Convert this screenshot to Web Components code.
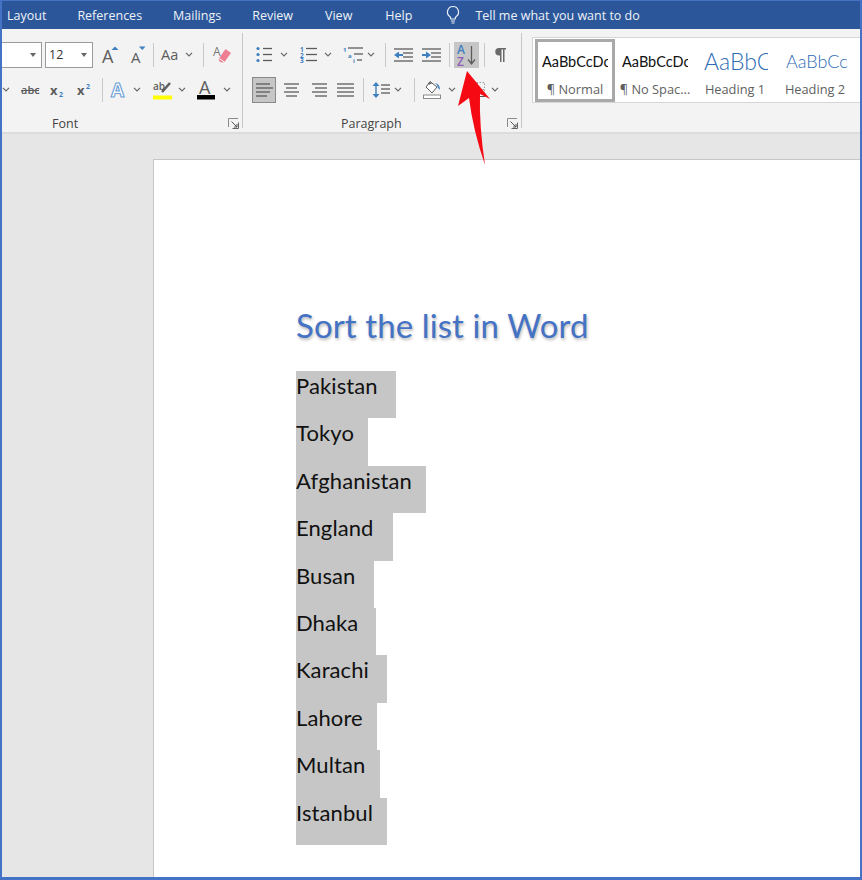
<!DOCTYPE html>
<html>
<head>
<meta charset="utf-8">
<title>Sort the list in Word</title>
<style>
  html, body { margin: 0; padding: 0; height: 100%; overflow: hidden; }
  body { font-family: "Open Sans", sans-serif; }
</style>
</head>
<body>
<word-window>
  <word-tabs></word-tabs>
  <word-ribbon>
    <font-group></font-group>
    <paragraph-group></paragraph-group>
    <style-gallery></style-gallery>
  </word-ribbon>
  <word-canvas>
    <h1 slot="title">Sort the list in Word</h1>
    <sel-line w="100">Pakistan</sel-line>
    <sel-line w="72">Tokyo</sel-line>
    <sel-line w="130">Afghanistan</sel-line>
    <sel-line w="97">England</sel-line>
    <sel-line w="78">Busan</sel-line>
    <sel-line w="80">Dhaka</sel-line>
    <sel-line w="91">Karachi</sel-line>
    <sel-line w="81">Lahore</sel-line>
    <sel-line w="84">Multan</sel-line>
    <sel-line w="91">Istanbul</sel-line>
  </word-canvas>
  <svg slot="overlay" width="862" height="880" viewBox="0 0 862 880" style="position:absolute;left:-2px;top:-1px;pointer-events:none">
    <path d="M467 71 L490 99 L480 94 Q479 125 485 165 Q473 130 469 98 L458 106 Z" fill="#f50a14"/>
  </svg>
</word-window>

<script>
const GREY = "#5c5c5c";
const BLUE = "#3d7fbf";
const svg = (w, h, body) => `<svg width="${w}" height="${h}" viewBox="0 0 ${w} ${h}" style="display:block;overflow:visible">${body}</svg>`;
const lines = (list, color = GREY) => list.map(([x1, y1, x2]) => `<path d="M${x1} ${y1}H${x2}" stroke="${color}" stroke-width="1.300"/>`).join("");
const txt = (x, y, size, color, s, extra = "") => `<text x="${x}" y="${y}" font-size="${size}" fill="${color}" font-family="Open Sans" ${extra}>${s}</text>`;

class WordWindow extends HTMLElement {
  constructor() {
    super();
    this.attachShadow({ mode: "open" }).innerHTML = `
    <style>
      :host {
        display: flex;
        flex-direction: column;
        position: relative;
        width: 858px;
        height: 876px;
        border: solid #4472c4;
        border-width: 1px 2px 3px 2px;
        overflow: hidden;
        background: #e6e6e6;
      }
    </style>
    <slot></slot>
    <slot name="overlay"></slot>`;
  }
}

class WordTabs extends HTMLElement {
  constructor() {
    super();
    const tabs = ["Layout", "References", "Mailings", "Review", "View", "Help"];
    this.attachShadow({ mode: "open" }).innerHTML = `
    <style>
      :host {
        display: flex;
        align-items: center;
        gap: 31px;
        height: 28px;
        padding-left: 5px;
        background: #2b579a;
        color: #eef2f8;
        font: 12.500px "Open Sans", sans-serif;
        flex: none;
      }
      span:nth-of-type(5) { margin-left: 1px; }
      span:nth-of-type(6) { margin-left: 2px; }
      .tell { display: flex; align-items: center; gap: 14px; margin-left: 2px; }
    </style>
    ${tabs.map((t) => `<span>${t}</span>`).join("")}
    <span class="tell">
      ${svg(16, 20, `<path d="M8 1.500a5.500 5.500 0 0 0-3.200 10c.8.700 1 1.500 1 2.500h4.400c0-1 .2-1.800 1-2.500A5.500 5.500 0 0 0 8 1.500zM6 16h4M6.500 18h3" fill="none" stroke="#eef2f8" stroke-width="1.200"/>`)}
      <span style="margin:0">Tell me what you want to do</span>
    </span>`;
  }
}

class WordRibbon extends HTMLElement {
  constructor() {
    super();
    this.attachShadow({ mode: "open" }).innerHTML = `
    <style>
      :host {
        display: flex;
        flex: none;
        height: 103px;
        background: #f3f3f3;
        border-bottom: 2px solid #dcdcdc;
        box-sizing: content-box;
        overflow: hidden;
      }
    </style>
    <slot></slot>`;
  }
}

class RibbonGroup extends HTMLElement {
  constructor() {
    super();
    this.attachShadow({ mode: "open" }).innerHTML = `
    <style>
      :host {
        display: flex;
        flex-direction: column;
        box-sizing: border-box;
        height: 95px;
        margin-top: 4px;
        border-right: 1px solid #c6c6c6;
        flex: none;
      }
      .rows { display: flex; flex-direction: column; gap: 8px; padding-top: 8px; height: 86px; box-sizing: border-box; }
      .foot { display: flex; align-items: center; height: 9px; font: 12.500px "Open Sans", sans-serif; color: #444; }
      .foot span { margin-left: var(--label-x, 0); }
      .foot svg { margin-left: auto; margin-right: 3px; }
    </style>
    <div class="rows"><slot></slot></div>
    <div class="foot">
      <span></span>
      ${svg(11, 11, `<path d="M.5 9V.5H10" fill="none" stroke="#8a8a8a"/><path d="M10.500 4.500V10.500H4.500" fill="none" stroke="#666"/><path d="M3.500 3.500L9 9M6 9H9V6" fill="none" stroke="#555"/>`)}
    </div>`;
  }
  connectedCallback() {
    this.shadowRoot.querySelector(".foot span").textContent = this.getAttribute("label");
  }
}

class ToolRow extends HTMLElement {
  constructor() {
    super();
    this.attachShadow({ mode: "open" }).innerHTML = `
    <style>:host { display: flex; align-items: center; height: 27px; }</style><slot></slot>`;
  }
}

class ToolBtn extends HTMLElement {
  constructor() {
    super();
    this.attachShadow({ mode: "open" }).innerHTML = `
    <style>
      :host { display: flex; align-items: center; justify-content: center; flex: none; height: 26px; }
      :host([on]) { background: #c6c6c6; }
      :host([on="box"]) { box-shadow: inset 0 0 0 1px #8a8a8a; }
    </style>
    <slot></slot>`;
  }
}

class ToolCaret extends HTMLElement {
  constructor() {
    super();
    this.attachShadow({ mode: "open" }).innerHTML = `
    <style>:host { display: block; flex: none; width: 8px; height: 5px; }</style>
    <svg width="8" height="5" viewBox="0 0 8 5" style="display:block"><path d="M1 .8L4 3.800L7 .8" fill="none" stroke="#666" stroke-width="1.200"/></svg>`;
  }
}

class ToolSep extends HTMLElement {
  constructor() {
    super();
    this.attachShadow({ mode: "open" }).innerHTML = `
    <style>:host { display: block; flex: none; width: 1px; height: 24px; background: #c9c9c9; }</style>`;
  }
}

class ComboBox extends HTMLElement {
  constructor() {
    super();
    this.attachShadow({ mode: "open" }).innerHTML = `
    <style>
      :host {
        display: flex; align-items: center; box-sizing: border-box; flex: none;
        height: 26px; background: #fff; border: 1px solid #9b9b9b;
        font: 12.500px "Open Sans", sans-serif; color: #333; padding-left: 3px;
      }
      :host(.cut) { border-left: 0; }
      span { flex: 1; }
      i { border: 3.500px solid transparent; border-top: 4px solid #666; border-bottom: 0; margin-right: 5px; }
    </style>
    <span><slot></slot></span><i></i>`;
  }
}

class FontGroup extends HTMLElement {
  constructor() {
    super();
    this.attachShadow({ mode: "open" }).innerHTML = `
    <style>
      :host { display: block; flex: none; }
      ribbon-group { width: 241px; --label-x: 50px; }
    </style>
    <ribbon-group label="Font">
      <tool-row>
        <combo-box class="cut" style="width:40px"></combo-box>
        <combo-box style="width:48px;margin-left:3px">12</combo-box>
        <tool-btn style="margin-left:9px">${svg(17, 20, txt(0, 18, 18, GREY, "A") + `<path d="M9.500 5L13 1.500L16.500 5Z" fill="${BLUE}"/>`)}</tool-btn>
        <tool-btn style="margin-left:11px">${svg(16, 20, txt(1, 18, 15, GREY, "A") + `<path d="M9 1.500H15.500L12.250 5Z" fill="${BLUE}"/>`)}</tool-btn>
        <tool-sep style="margin-left:7px"></tool-sep>
        <tool-btn style="margin-left:7px">${svg(18, 20, txt(0, 15, 14.5, GREY, "Aa"))}</tool-btn>
        <tool-caret style="margin-left:6px"></tool-caret>
        <tool-sep style="margin-left:10px"></tool-sep>
        <tool-btn style="margin-left:9px">${svg(18, 20, txt(0, 11, 12, "#777", "A") + `<path d="M5.500 14L12.500 4L18 8L11.500 17Q9 18 6.500 16.500Z" fill="#ee7f92"/><path d="M6 13.500L11.500 17" stroke="#fff"/>`)}</tool-btn>
      </tool-row>
      <tool-row>
        <tool-caret></tool-caret>
        <tool-btn style="margin-left:11px">${svg(18, 18, txt(0, 13, 11, GREY, "abc", 'font-weight="600"') + `<path d="M0 9.500H18" stroke="${GREY}"/>`)}</tool-btn>
        <tool-btn style="margin-left:11px">${svg(14, 18, txt(0, 14, 13, GREY, "x", 'font-weight="700"') + txt(9, 16, 7, BLUE, "2", 'font-weight="700"'))}</tool-btn>
        <tool-btn style="margin-left:13px">${svg(15, 18, txt(0, 14, 13, GREY, "x", 'font-weight="700"') + txt(9, 8, 7, BLUE, "2", 'font-weight="700"'))}</tool-btn>
        <tool-sep style="margin-left:10px"></tool-sep>
        <tool-btn style="margin-left:8px">${svg(16, 18, `<text x="0" y="16" font-size="19" font-family="Open Sans" font-weight="700" fill="#fff" stroke="#6d9fd6" stroke-width="1.100">A</text>`)}</tool-btn>
        <tool-caret style="margin-left:6px"></tool-caret>
        <tool-btn style="margin-left:12px">${svg(19, 20, txt(0, 10, 10, GREY, "ab", 'font-weight="600"') + `<path d="M9 12L17 3" stroke="${GREY}" stroke-width="2.500"/><rect y="15.500" width="19" height="4" fill="#ffff00"/>`)}</tool-btn>
        <tool-caret style="margin-left:6px"></tool-caret>
        <tool-btn style="margin-left:11px">${svg(18, 20, txt(2, 14, 18, GREY, "A") + `<rect y="15" width="18" height="4.500" fill="#000"/>`)}</tool-btn>
        <tool-caret style="margin-left:8px"></tool-caret>
      </tool-row>
    </ribbon-group>`;
  }
}

class ParagraphGroup extends HTMLElement {
  constructor() {
    super();
    const align = (list) => svg(17, 14, lines(list));
    const indent = (d) => svg(19, 14, lines([[0, 1, 19], [9, 5, 19], [9, 9, 19], [0, 13, 19]]) +
      `<path d="${d}" fill="${BLUE}"/>`);
    this.attachShadow({ mode: "open" }).innerHTML = `
    <style>
      :host { display: block; flex: none; }
      ribbon-group { width: 279px; --label-x: 98px; }
    </style>
    <ribbon-group label="Paragraph">
      <tool-row>
        <tool-btn style="margin-left:13px">${svg(16, 17, `<circle cx="2" cy="2.500" r="1.600" fill="${BLUE}"/><circle cx="2" cy="8.500" r="1.600" fill="${BLUE}"/><circle cx="2" cy="14.500" r="1.600" fill="${BLUE}"/>` + lines([[7, 2.5, 16], [7, 8.5, 16], [7, 14.5, 16]]))}</tool-btn>
        <tool-caret style="margin-left:8px"></tool-caret>
        <tool-btn style="margin-left:12px">${svg(17, 17, txt(0, 5.5, 6.5, BLUE, "1", 'font-weight="700"') + txt(0, 11.5, 6.5, BLUE, "2", 'font-weight="700"') + txt(0, 17, 6.5, BLUE, "3", 'font-weight="700"') + lines([[6, 2.5, 17], [6, 8.5, 17], [6, 14.5, 17]]))}</tool-btn>
        <tool-caret style="margin-left:7px"></tool-caret>
        <tool-btn style="margin-left:11px">${svg(20, 17, txt(0, 6, 6, BLUE, "1", 'font-weight="700"') + txt(5, 11.5, 6, BLUE, "a", 'font-weight="700"') + txt(10, 17, 6, BLUE, "i", 'font-weight="700"') + lines([[5, 2, 20], [11, 8, 20], [14, 14, 19]]))}</tool-btn>
        <tool-caret style="margin-left:4px"></tool-caret>
        <tool-sep style="margin-left:10px"></tool-sep>
        <tool-btn style="margin-left:8px">${indent("M0 7L5 3.500V6H9V8H5V10.500Z")}</tool-btn>
        <tool-btn style="margin-left:9px">${indent("M9 7L4 3.500V6H0V8H4V10.500Z")}</tool-btn>
        <tool-sep style="margin-left:8px"></tool-sep>
        <tool-btn on style="margin-left:4px;width:25px">${svg(19, 22, txt(0, 10, 12, BLUE, "A", 'font-weight="600"') + txt(0, 21.5, 12, "#8e5bb5", "Z", 'font-weight="600"') + `<path d="M14.500 2V19M11 15.500L14.500 20L18 15.500" fill="none" stroke="${GREY}" stroke-width="1.300"/>`)}</tool-btn>
        <tool-sep style="margin-left:5px"></tool-sep>
        <tool-btn style="margin-left:9px">${svg(12, 15, `<path d="M5 1H12V2.500H10.500V15H9V2.500H7.500V15H6V8.500H5A3.750 3.750 0 0 1 5 1Z" fill="#6a6a6a"/>`)}</tool-btn>
      </tool-row>
      <tool-row>
        <tool-btn on="box" style="margin-left:9px;width:24px">${align([[0, 1, 14], [0, 5, 17], [0, 9, 14], [0, 13, 11]])}</tool-btn>
        <tool-btn style="margin-left:7px">${align([[1, 1, 16], [3, 5, 14], [1, 9, 16], [3, 13, 14]])}</tool-btn>
        <tool-btn style="margin-left:10px">${align([[2, 1, 17], [5, 5, 17], [2, 9, 17], [5, 13, 17]])}</tool-btn>
        <tool-btn style="margin-left:10px">${align([[0, 1, 17], [0, 5, 17], [0, 9, 17], [0, 13, 17]])}</tool-btn>
        <tool-sep style="margin-left:9px"></tool-sep>
        <tool-btn style="margin-left:8px">${svg(18, 18, `<path d="M4 1L7.500 5H.5ZM4 17L.5 13H7.500ZM3.300 4H4.700V14H3.300Z" fill="${BLUE}"/>` + lines([[9, 4, 18], [9, 8, 18], [9, 12, 18]]))}</tool-btn>
        <tool-caret style="margin-left:4px"></tool-caret>
        <tool-sep style="margin-left:12px"></tool-sep>
        <tool-btn style="margin-left:8px">${svg(18, 19, `<path d="M3 7L7 1.500L14 7L9 13Z" fill="#fff" stroke="${GREY}"/><path d="M5 5L7 2L9 3.500Z" fill="${GREY}"/><path d="M12 3Q17 4 17 10L15 8Q15 5 12 3Z" fill="${BLUE}"/><rect x=".5" y="15" width="17" height="3.500" fill="#fff" stroke="#8a8a8a"/>`)}</tool-btn>
        <tool-caret style="margin-left:7px"></tool-caret>
        <tool-btn style="margin-left:14px">${svg(15, 15, `<path d="M.5 .5H14.500V14.500H.5ZM7.500 .5V14.500M.5 7.500H14.500" fill="none" stroke="#9a9a9a" stroke-dasharray="1.500 1.500"/><path d="M0 14.500H15" stroke="#555"/>`)}</tool-btn>
        <tool-caret style="margin-left:6px"></tool-caret>
      </tool-row>
    </ribbon-group>`;
  }
}

class StyleTile extends HTMLElement {
  constructor() {
    super();
    this.attachShadow({ mode: "open" }).innerHTML = `
    <style>
      :host { display: flex; flex-direction: column; box-sizing: border-box; width: 80px; flex: none; height: 100%; align-items: center; overflow: hidden; padding-top: 3px; }
      :host([active]) { border: 3px solid #a9a9a9; box-shadow: inset 0 0 0 1px #fff; padding-top: 0; }
      .sample { height: 38px; display: flex; align-items: center; width: 66px; overflow: hidden; white-space: nowrap;
        padding-left: var(--sample-shift, 0); box-sizing: border-box;
        font: var(--sample-weight, 400) var(--sample-size, 14.500px) "Lato", sans-serif; color: var(--sample-color, #111); }
      .name { font: 12.800px "Open Sans", sans-serif; color: #5f5f5f; white-space: nowrap; }
    </style>
    <div class="sample"><slot name="sample"></slot></div>
    <div class="name"><slot></slot></div>`;
  }
}

class StyleGallery extends HTMLElement {
  constructor() {
    super();
    this.attachShadow({ mode: "open" }).innerHTML = `
    <style>
      :host {
        display: flex; flex: 1; box-sizing: border-box; height: 66px;
        margin: 8px 0 0 10px; background: #fff; border: 1px solid #d6d6d6; border-right: 0;
        padding: 1px 0 0 2px; overflow: hidden;
      }
    </style>
    <style-tile active><span slot="sample">AaBbCcDc</span>¶ Normal</style-tile>
    <style-tile><span slot="sample">AaBbCcDc</span>¶ No Spac...</style-tile>
    <style-tile style="--sample-size:23px;--sample-weight:300;--sample-color:#2f6db5;--sample-shift:2px"><span slot="sample">AaBbCc</span>Heading 1</style-tile>
    <style-tile style="--sample-size:18px;--sample-weight:300;--sample-color:#2f6db5;--sample-shift:4px"><span slot="sample">AaBbCcD</span>Heading 2</style-tile>`;
  }
}

class WordCanvas extends HTMLElement {
  constructor() {
    super();
    this.attachShadow({ mode: "open" }).innerHTML = `
    <style>
      :host {
        display: flex;
        flex: 1;
        min-height: 0;
        padding: 25px 0 0 151px;
        background: #e6e6e6;
      }
      .page {
        flex: 1;
        background: #fff;
        border: solid #c6c6c6;
        border-width: 1px 0 0 1px;
        padding: 141px 0 0 142px;
        overflow: hidden;
      }
      ::slotted(h1) {
        margin: 0 0 22px;
        height: 48px;
        font: 400 33px/48px "Lato", sans-serif;
        letter-spacing: .1px;
        color: #4472c4;
        text-shadow: 1px 2px 3px rgba(0, 0, 0, .28);
      }
    </style>
    <div class="page">
      <slot name="title"></slot>
      <slot></slot>
    </div>`;
  }
}

class SelLine extends HTMLElement {
  constructor() {
    super();
    this.attachShadow({ mode: "open" }).innerHTML = `
    <style>
      :host {
        display: block;
        box-sizing: border-box;
        height: 47.400px;
        background: #c6c6c6;
        font: 22px/30px "Lato", sans-serif;
        letter-spacing: .1px;
        color: #111;
        white-space: nowrap;
      }
    </style>
    <slot></slot>`;
  }
  connectedCallback() {
    this.style.width = this.getAttribute("w") + "px";
  }
}

customElements.define("word-window", WordWindow);
customElements.define("word-tabs", WordTabs);
customElements.define("word-ribbon", WordRibbon);
customElements.define("ribbon-group", RibbonGroup);
customElements.define("tool-row", ToolRow);
customElements.define("tool-btn", ToolBtn);
customElements.define("tool-caret", ToolCaret);
customElements.define("tool-sep", ToolSep);
customElements.define("combo-box", ComboBox);
customElements.define("font-group", FontGroup);
customElements.define("paragraph-group", ParagraphGroup);
customElements.define("style-tile", StyleTile);
customElements.define("style-gallery", StyleGallery);
customElements.define("word-canvas", WordCanvas);
customElements.define("sel-line", SelLine);
</script>
</body>
</html>
